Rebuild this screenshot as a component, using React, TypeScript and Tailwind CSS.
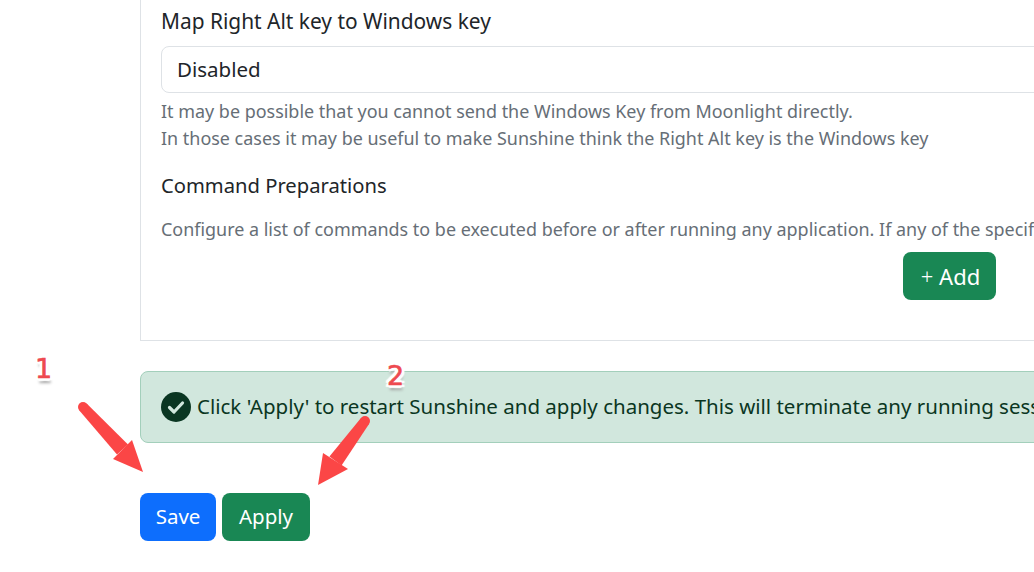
function Arrow({ start, tip, left, right }: { start: number[]; tip: number[]; left: number[]; right: number[] }) {
    // shaft widens a little from the round tail up to the head
    const neck = [(left[0] + right[0]) / 2, (left[1] + right[1]) / 2];
    const dx = neck[0] - start[0];
    const dy = neck[1] - start[1];
    const len = Math.hypot(dx, dy);
    const nx = -dy / len;
    const ny = dx / len;
    const shaft = [
        [start[0] + nx * 5, start[1] + ny * 5],
        [neck[0] + nx * 7.5, neck[1] + ny * 7.5],
        [neck[0] - nx * 7.5, neck[1] - ny * 7.5],
        [start[0] - nx * 5, start[1] - ny * 5],
    ];
    return (
        <>
            <circle cx={start[0]} cy={start[1]} r="5" fill="#fb4646" />
            <polygon points={shaft.join(' ')} fill="#fb4646" />
            <polygon points={`${tip} ${left} ${right}`} fill="#fb4646" />
        </>
    );
}

export default function App() {
    return (
        <div className="relative w-[1034px] h-[572px] overflow-hidden bg-white text-[#212529] font-['Noto_Sans','Open_Sans',sans-serif]">
            <div className="ml-[140px] w-[1100px]">
                <section className="h-[341px] border-l border-b border-[#dee2e6] pl-5 pt-[5px]">
                    <div className="text-[20.9px] leading-[32px]">Map Right Alt key to Windows key</div>
                    <div className="mt-[9px] h-[47px] w-full flex items-center rounded-lg border border-[#dee2e6] px-[15px] text-[20.500px]">Disabled</div>
                    <p className="mt-[5px] text-[17.96px] leading-[27px] text-[#666e76]">
                        It may be possible that you cannot send the Windows Key from Moonlight directly.
                        <br />
                        In those cases it may be useful to make Sunshine think the Right Alt key is the Windows key
                    </p>
                    <div className="mt-[18px] text-[20.2px] leading-[30px]">Command Preparations</div>
                    <p className="mt-[16px] text-[17.96px] leading-[27px] whitespace-nowrap text-[#666e76]">
                        Configure a list of commands to be executed before or after running any application. If any of the specified preparation commands fail
                    </p>
                    <div className="mt-[9px] ml-[742px]">
                        <button className="h-12 w-[93px] rounded-lg bg-[#198754] pl-[2px] text-[22px] text-white"><span className="font-light">+</span> Add</button>
                    </div>
                </section>

                <div className="mt-[30px] h-[72px] flex items-center gap-[6px] rounded-lg border border-[#a3cfbb] bg-[#d1e7dd] pl-5 text-[20.5px] whitespace-nowrap text-[#0a3622]">
                    <svg width="30" height="30" viewBox="0 0 30 30" className="shrink-0">
                        <circle cx="15" cy="15" r="15" fill="#0a3622" />
                        <path d="M8.5 15.5l4.5 4.5 8.500-9" fill="none" stroke="#d1e7dd" strokeWidth="3.200" strokeLinecap="round" strokeLinejoin="round" />
                    </svg>
                    <span className="pb-[2px]">Click 'Apply' to restart Sunshine and apply changes. This will terminate any running sessions.</span>
                </div>

                <div className="mt-[50px] flex gap-[6px]">
                    <button className="h-12 w-[76px] rounded-lg bg-[#0d6efd] pb-[2px] text-[20.5px] text-white">Save</button>
                    <button className="h-12 w-[88px] rounded-lg bg-[#198754] pb-[2px] text-[20.5px] text-white">Apply</button>
                </div>
            </div>

            <div className="absolute left-[35px] top-[351px] text-[27px] leading-[36px] text-[#ee4a50] font-['DejaVu_Sans',sans-serif] [-webkit-text-stroke:0.6px_#ee4a50] [text-shadow:-3px_-2px_1px_#fff,3px_-2px_1px_#fff,-3px_2px_1px_#fff,3px_2px_1px_#fff,0_-3px_1px_#fff,0_3px_1px_#fff,1px_5px_3px_#a0a0a0]">1</div>
            <div className="absolute left-[387px] top-[358px] text-[27px] leading-[36px] text-[#ee4a50] font-['DejaVu_Sans',sans-serif] [-webkit-text-stroke:0.6px_#ee4a50] [text-shadow:-3px_-2px_1px_#fff,3px_-2px_1px_#fff,-3px_2px_1px_#fff,3px_2px_1px_#fff,0_-3px_1px_#fff,0_3px_1px_#fff,1px_5px_3px_#a0a0a0]">2</div>

            <svg className="absolute left-0 top-0 pointer-events-none" width="1034" height="572">
                <Arrow start={[83, 407]} tip={[143, 472]} left={[113, 459]} right={[132, 440]} />
                <Arrow start={[365, 421]} tip={[318, 485]} left={[348, 469]} right={[323, 453]} />
            </svg>
        </div>
    );
}
